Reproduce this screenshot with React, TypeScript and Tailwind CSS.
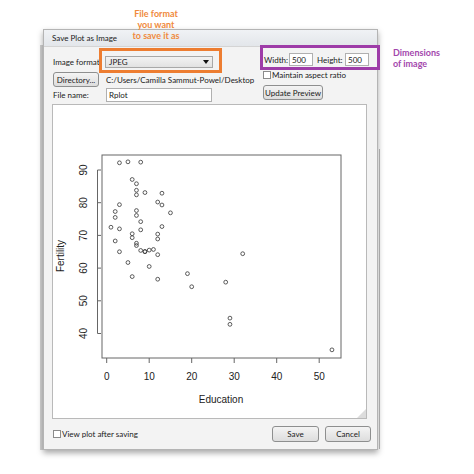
import React from 'react';

// swiss dataset: [Education, Fertility]
const swiss: [number, number][] = [
    [12, 80.2], [9, 83.1], [5, 92.5], [7, 85.8], [15, 76.9], [7, 76.1], [7, 83.8], [8, 92.4],
    [7, 82.4], [13, 82.9], [6, 87.1], [12, 64.1], [7, 66.9], [12, 68.9], [5, 61.7], [2, 68.3],
    [8, 71.7], [28, 55.7], [20, 54.3], [9, 65.1], [10, 65.5], [3, 65.0], [12, 56.6], [6, 57.4],
    [1, 72.5], [8, 74.2], [3, 72.0], [10, 60.5], [19, 58.3], [8, 65.4], [2, 75.5], [6, 69.3],
    [2, 77.3], [6, 70.5], [3, 79.4], [9, 65.0], [3, 92.2], [13, 79.3], [12, 70.4], [11, 65.7],
    [13, 72.7], [32, 64.4], [7, 77.6], [7, 67.6], [53, 35.0], [29, 44.7], [29, 42.8],
];

const px = (e: number) => 106.7 + e * 4.25;
const py = (f: number) => 170 + (90 - f) * 3.27;

function Plot() {
    return (
        <svg width={313} height={313} viewBox="53 105 313 313" className="block">
            <g fontFamily="'Liberation Sans', Arial, sans-serif" fontSize={10} fill="#222">
                <rect x={102} y={155} width={239} height={203} fill="none" stroke="#666" strokeWidth={1} />
                {/* y axis */}
                <line x1={97.5} y1={py(90)} x2={97.5} y2={py(40)} stroke="#666" />
                {[40, 50, 60, 70, 80, 90].map(v => (
                    <g key={v}>
                        <line x1={97.5} y1={py(v)} x2={101} y2={py(v)} stroke="#666" />
                        <text transform={`translate(87, ${py(v)}) rotate(-90)`} textAnchor="middle">{v}</text>
                    </g>
                ))}
                {/* x axis */}
                {[0, 10, 20, 30, 40, 50].map(v => (
                    <g key={v}>
                        <line x1={px(v)} y1={358} x2={px(v)} y2={363} stroke="#666" />
                        <text x={px(v)} y={380} textAnchor="middle">{v}</text>
                    </g>
                ))}
                <text x={221} y={403} textAnchor="middle">Education</text>
                <text transform="translate(64, 256) rotate(-90)" textAnchor="middle">Fertility</text>
                {swiss.map(([e, f], i) => (
                    <circle key={i} cx={px(e)} cy={py(f)} r={1.9} fill="none" stroke="#333" strokeWidth={0.8} />
                ))}
            </g>
            <polygon points="357,418 366,418 366,409" fill="#dcdcdc" />
        </svg>
    );
}

function Boton({ children, className = '' }: { children: React.ReactNode; className?: string }) {
    return (
        <div className={`flex items-center justify-center rounded-[3px] border border-[#8e8f8f] bg-linear-to-b from-[#f4f4f4] to-[#dddddd] ${className}`}>
            {children}
        </div>
    );
}

function Casilla() {
    return <div className="w-[8px] h-[8px] border border-[#8a8a8a] bg-white shrink-0" />;
}

export default function App() {
    return (
        <div className="w-[474px] h-[474px] bg-white relative overflow-hidden font-['Lato','Open_Sans',sans-serif] text-[#1a1a1a]">
            <div className="pt-[29px] pl-[40px] flex">
                {/* ventana de fondo, izquierda */}
                <div className="w-[3px] mt-[16px] h-[405px] bg-[#d2d2d2]" />

                <div className="w-[335px] h-[421px] flex flex-col bg-[#f3f3f3] border border-[#b4b4b4] shadow-[0_3px_6px_rgba(0,0,0,0.35)] text-[8px] leading-none">
                    <div className="h-[17px] shrink-0 flex items-center pl-[8px] bg-linear-to-b from-[#f0f2f5] to-[#e3e6ea] border-b border-[#d4d4d4]">
                        Save Plot as Image
                    </div>

                    <div className="flex-1 flex flex-col pl-[8px] pr-[6px]">
                        <div className="flex items-start">
                            {/* columna izquierda */}
                            <div className="w-[211px] pt-[9px] flex flex-col">
                                <div className="h-[12px] flex items-center">
                                    <span className="w-[53px] pl-[1px]">Image format</span>
                                    <div className="w-[108px] h-full flex items-center justify-between px-[3px] border border-[#a8a8a8] bg-linear-to-b from-[#f2f2f2] to-[#e2e2e2]">
                                        <span>JPEG</span>
                                        <svg width={6} height={4} viewBox="0 0 6 4"><polygon points="0,0 6,0 3,4" fill="#111" /></svg>
                                    </div>
                                </div>
                                <div className="h-[15px] mt-[4px] flex items-center">
                                    <Boton className="w-[46px] h-full ml-[1px]">Directory...</Boton>
                                    <span className="ml-[7px]">C:/Users/Camilla Sammut-Powel/Desktop</span>
                                </div>
                                <div className="h-[14px] mt-[1px] flex items-center">
                                    <span className="w-[54px] pl-[1px]">File name:</span>
                                    <div className="w-[106px] h-full flex items-center px-[2px] border border-[#b0b0b0] bg-white">Rplot</div>
                                </div>
                            </div>

                            {/* columna derecha */}
                            <div className="flex-1 pt-[6px] flex flex-col">
                                <div className="h-[13px] flex items-center">
                                    <span className="w-[26px] pl-[1px]">Width:</span>
                                    <div className="w-[24px] h-full flex items-center px-[2px] border border-[#b0b0b0] bg-white">500</div>
                                    <span className="w-[28px] ml-[4px]">Height:</span>
                                    <div className="w-[24px] h-full flex items-center px-[2px] border border-[#b0b0b0] bg-white">500</div>
                                </div>
                                <div className="mt-[5px] h-[8px] flex items-center gap-[1px]">
                                    <Casilla />
                                    <span>Maintain aspect ratio</span>
                                </div>
                                <Boton className="mt-[6px] w-[60px] h-[15px]">Update Preview</Boton>
                            </div>
                        </div>

                        <div className="mt-[2px] w-[315px] h-[315px] shrink-0 border border-[#b9b9b9] bg-white">
                            <Plot />
                        </div>

                        <div className="flex-1 flex items-center">
                            <div className="flex items-center gap-[1px] pl-[1px]">
                                <Casilla />
                                <span>View plot after saving</span>
                            </div>
                            <div className="ml-auto flex gap-[6px]">
                                <Boton className="w-[47px] h-[16px] border-[#6f6f6f]">Save</Boton>
                                <Boton className="w-[46px] h-[16px]">Cancel</Boton>
                            </div>
                        </div>
                    </div>
                </div>

                {/* ventana de fondo, derecha */}
                <div className="w-[1px] ml-[1px] mt-[120px] h-[300px] bg-[#a8a8a8]" />
            </div>

            {/* anotaciones */}
            <div className="absolute left-[99px] top-[48px] w-[123px] h-[25px] border-[3px] border-[#ed7d31]" />
            <div className="absolute left-[260px] top-[45px] w-[120px] h-[25px] border-[3px] border-[#9e3ca8]" />
            <div className="absolute left-[126px] top-[8px] w-[60px] text-center text-[9px] leading-[11px] font-bold text-[#f08a3c]">
                File format<br />you want<br />to save it as
            </div>
            <div className="absolute left-[393px] top-[47px] text-[9px] leading-[11px] font-bold text-[#a347ad]">
                Dimensions<br />of image
            </div>
        </div>
    );
}
